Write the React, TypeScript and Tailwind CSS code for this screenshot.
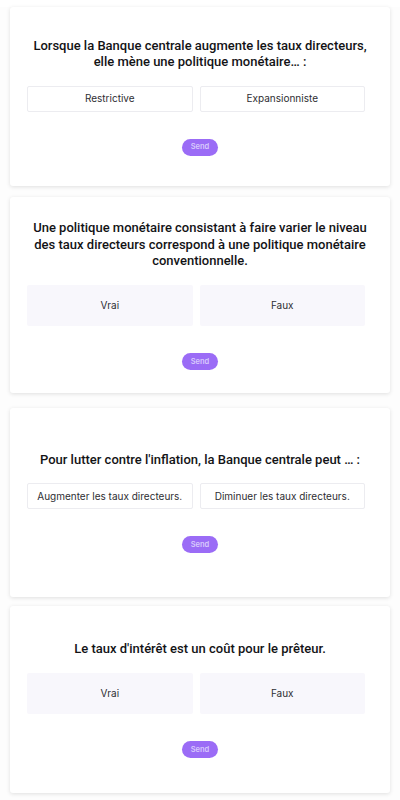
type Quiz = {
  question: string[];
  options: string[];
  variant: 'outline' | 'filled';
  height: string;
  gap: string;
};

const quizzes: Quiz[] = [
  {
    question: ['Lorsque la Banque centrale augmente les taux directeurs,', 'elle mène une politique monétaire… :'],
    options: ['Restrictive', 'Expansionniste'],
    variant: 'outline',
    height: 'h-[179px]',
    gap: 'mt-[7px]',
  },
  {
    question: [
      'Une politique monétaire consistant à faire varier le niveau',
      'des taux directeurs correspond à une politique monétaire',
      'conventionnelle.',
    ],
    options: ['Vrai', 'Faux'],
    variant: 'filled',
    height: 'h-[196px]',
    gap: 'mt-[11px]',
  },
  {
    question: ["Pour lutter contre l'inflation, la Banque centrale peut … :"],
    options: ['Augmenter les taux directeurs.', 'Diminuer les taux directeurs.'],
    variant: 'outline',
    height: 'h-[189px]',
    gap: 'mt-[15px]',
  },
  {
    question: ["Le taux d'intérêt est un coût pour le prêteur."],
    options: ['Vrai', 'Faux'],
    variant: 'filled',
    height: 'h-[187px]',
    gap: 'mt-[9px]',
  },
];

const QuizCard = ({ quiz }: { quiz: Quiz }) => {
  const optionClass =
    quiz.variant === 'outline'
      ? 'h-[26px] border border-[#ececf0] bg-white'
      : 'h-[41px] bg-[#f8f7fc]';

  return (
    <div
      className={`${quiz.gap} ${quiz.height} mx-[10px] flex flex-col items-center justify-center rounded-[3px] bg-white px-[17px] shadow-[0_1px_4px_rgba(0,0,0,0.12)]`}
    >
      <h2 className="whitespace-nowrap text-center font-['Roboto',sans-serif] text-[13px] font-medium leading-[16.5px] text-[#131316]">
        {quiz.question.map((line) => (
          <span key={line} className="block">
            {line}
          </span>
        ))}
      </h2>

      <div className="mt-[15px] grid w-full grid-cols-2 gap-[7px] pr-[8px]">
        {quiz.options.map((opt) => (
          <button
            key={opt}
            className={`${optionClass} flex items-center justify-center rounded-[2px] text-[10px] text-[#2e2e33]`}
          >
            {opt}
          </button>
        ))}
      </div>

      <button className="mt-[27px] h-[17px] w-[36px] rounded-full bg-[#9b6cf6] text-[7.5px] font-semibold text-[#d8cafc]">
        Send
      </button>
    </div>
  );
};

export default function App() {
  return (
    <div className="min-h-[800px] w-[400px] bg-[#fdfdfd] pb-[7px] font-['Inter',sans-serif]">
      {quizzes.map((q, i) => (
        <QuizCard key={i} quiz={q} />
      ))}
    </div>
  );
}
